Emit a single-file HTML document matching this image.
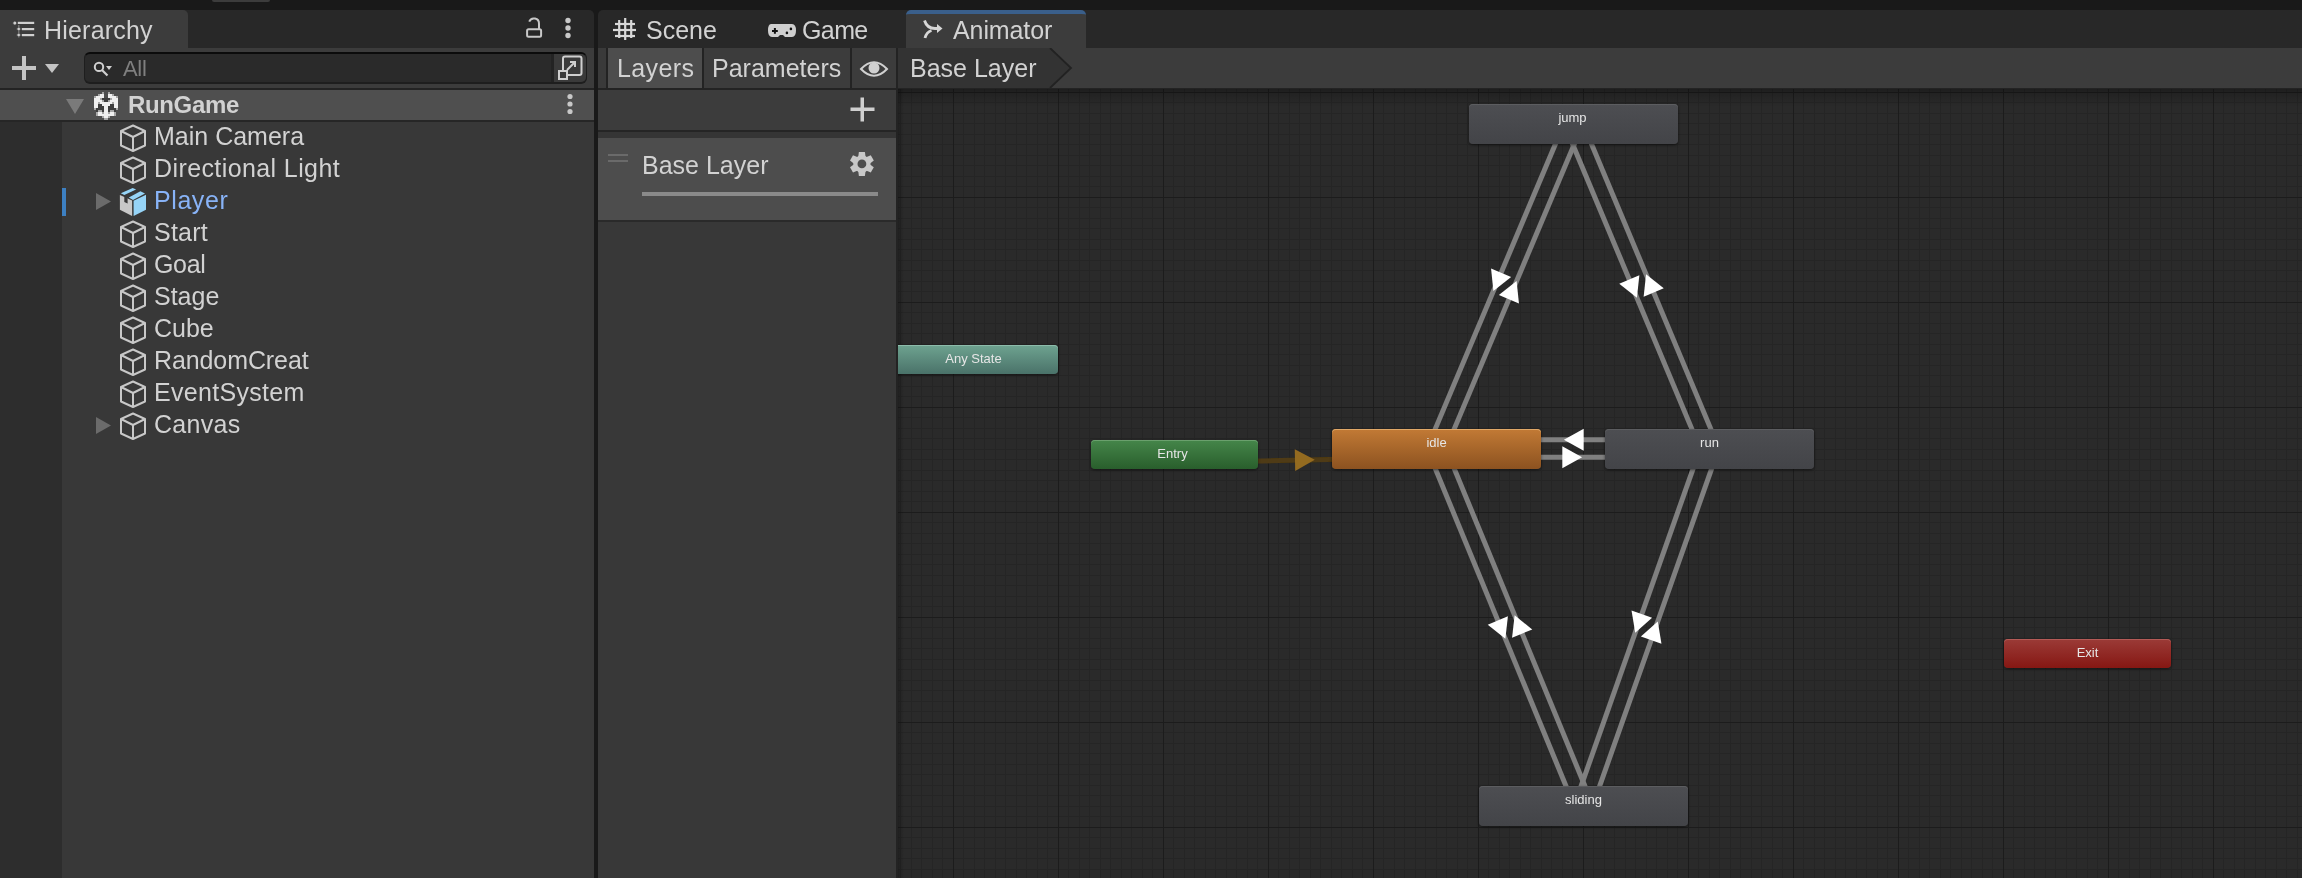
<!DOCTYPE html><html><head><meta charset="utf-8"><style>
*{margin:0;padding:0;box-sizing:border-box}
html,body{width:2302px;height:878px;overflow:hidden;background:#191919;font-family:'Liberation Sans', sans-serif}
.a{position:absolute}
.t{position:absolute;font-size:25px;line-height:25px;color:#d2d2d2;white-space:nowrap;will-change:transform}
</style></head><body><div class="a" style="left:212px;top:0;width:58px;height:2px;background:#3c3c3c;border-radius:0 0 2px 2px"></div><div class="a" style="left:0;top:10px;width:594px;height:38px;background:#282828;border-top-right-radius:5px"></div><div class="a" style="left:0;top:10px;width:188px;height:38px;background:#3c3c3c;border-top-right-radius:5px"></div><svg class="a" style="left:12px;top:20px" width="24" height="20" viewBox="0 0 24 20"><g fill="#d0d0d0"><rect x="1.6" y="1.9" width="2.4" height="2.4"/><rect x="0.8" y="2.6" width="4" height="1" opacity=".5"/><rect x="2.3" y="1" width="1" height="4" opacity=".5"/><rect x="5.8" y="1.8" width="16.4" height="2.2"/><rect x="5.6" y="7.9" width="2.2" height="2.2"/><rect x="9.9" y="8" width="12.3" height="2.2"/><rect x="5.6" y="13.9" width="2.2" height="2.2"/><rect x="9.9" y="14" width="12.3" height="2.2"/><rect x="6.2" y="5" width="1.2" height="12.5" opacity=".45"/><rect x="4.6" y="8.5" width="5" height="1" opacity=".4"/><rect x="4.6" y="14.5" width="5" height="1" opacity=".4"/></g></svg><div class="t" style="left:44px;top:18px;letter-spacing:0.2px">Hierarchy</div><svg class="a" style="left:524px;top:16px" width="20" height="24" viewBox="0 0 20 24"><rect x="3.1" y="13.2" width="14" height="7.6" rx="1.5" fill="none" stroke="#c8c8c8" stroke-width="2"/><path d="M5.2 5.6 A5.1 5.1 0 0 1 15 7.8 V13" fill="none" stroke="#c8c8c8" stroke-width="2"/></svg><svg class="a" style="left:562px;top:16px" width="12" height="24" viewBox="0 0 12 24"><circle cx="6" cy="4.5" r="2.7" fill="#c8c8c8"/><circle cx="6" cy="12" r="2.7" fill="#c8c8c8"/><circle cx="6" cy="19.5" r="2.7" fill="#c8c8c8"/></svg><div class="a" style="left:0;top:48px;width:594px;height:40px;background:#3c3c3c"></div><div class="a" style="left:0;top:88px;width:594px;height:2px;background:#232323"></div><svg class="a" style="left:12px;top:56px" width="50" height="26" viewBox="0 0 50 26"><rect x="10" y="0" width="4" height="24" fill="#c4c4c4"/><rect x="0" y="10" width="24" height="4" fill="#c4c4c4"/><polygon points="33,8 47,8 40,17" fill="#c4c4c4"/></svg><div class="a" style="left:84px;top:52px;width:503px;height:32px;background:#2a2a2a;border:1px solid #1e1e1e;border-top:2px solid #0b0b0b;border-bottom:2px solid #1e1e1e;border-radius:6px;"></div><div class="a" style="left:551px;top:54px;width:3px;height:28px;background:#232323"></div><div class="a" style="left:554px;top:54px;width:32px;height:28px;background:#3a3a3a;border-radius:0 5px 5px 0"></div><svg class="a" style="left:556px;top:54px" width="28" height="28" viewBox="0 0 28 28"><rect x="7" y="2.5" width="18.5" height="18.5" rx="2" fill="none" stroke="#cfcfcf" stroke-width="2"/><rect x="3" y="17" width="8" height="8" fill="#3a3a3a" stroke="#cfcfcf" stroke-width="2"/><path d="M11 16 L19 8 M14 8 H19 V13" fill="none" stroke="#cfcfcf" stroke-width="2"/></svg><svg class="a" style="left:90px;top:58px" width="26" height="22" viewBox="0 0 26 22"><circle cx="9" cy="8.9" r="4.2" fill="none" stroke="#d0d0d0" stroke-width="2"/><path d="M12 12 L17.5 17.5" stroke="#d0d0d0" stroke-width="2.2"/><polygon points="16,8 22,8 19,12" fill="#d0d0d0"/></svg><div class="t" style="left:122.5px;top:56.3px;color:#7f7f7f;font-size:22px;letter-spacing:-0.3px">All</div><div class="a" style="left:0;top:90px;width:594px;height:788px;background:#383838"></div><div class="a" style="left:0;top:90px;width:62px;height:788px;background:#2d2d2d"></div><div class="a" style="left:0;top:90px;width:594px;height:30px;background:#4f4f4f"></div><div class="a" style="left:0;top:120px;width:594px;height:2px;background:#262626"></div><svg class="a" style="left:64px;top:96px" width="22" height="20" viewBox="0 0 22 20"><polygon points="2,3 20,3 11,18" fill="#7a7a7a"/></svg><svg class="a" style="left:94px;top:92px" width="24" height="28" viewBox="0 0 24 28" shape-rendering="crispEdges"><rect x="8" y="0" width="2" height="2" fill="#a8a8a8"/><rect x="14" y="0" width="2" height="2" fill="#a8a8a8"/><rect x="4" y="2" width="2" height="2" fill="#a8a8a8"/><rect x="6" y="2" width="2" height="2" fill="#f0f0f0"/><rect x="8" y="2" width="2" height="2" fill="#f0f0f0"/><rect x="14" y="2" width="2" height="2" fill="#f0f0f0"/><rect x="16" y="2" width="2" height="2" fill="#f0f0f0"/><rect x="18" y="2" width="2" height="2" fill="#a8a8a8"/><rect x="0" y="4" width="2" height="2" fill="#a8a8a8"/><rect x="2" y="4" width="2" height="2" fill="#f0f0f0"/><rect x="4" y="4" width="2" height="2" fill="#f0f0f0"/><rect x="6" y="4" width="2" height="2" fill="#f0f0f0"/><rect x="8" y="4" width="2" height="2" fill="#f0f0f0"/><rect x="14" y="4" width="2" height="2" fill="#f0f0f0"/><rect x="16" y="4" width="2" height="2" fill="#f0f0f0"/><rect x="18" y="4" width="2" height="2" fill="#f0f0f0"/><rect x="20" y="4" width="2" height="2" fill="#f0f0f0"/><rect x="22" y="4" width="2" height="2" fill="#a8a8a8"/><rect x="0" y="6" width="2" height="2" fill="#f0f0f0"/><rect x="2" y="6" width="2" height="2" fill="#f0f0f0"/><rect x="4" y="6" width="2" height="2" fill="#f0f0f0"/><rect x="6" y="6" width="2" height="2" fill="#a8a8a8"/><rect x="8" y="6" width="2" height="2" fill="#3e3e3e"/><rect x="10" y="6" width="2" height="2" fill="#3e3e3e"/><rect x="12" y="6" width="2" height="2" fill="#3e3e3e"/><rect x="14" y="6" width="2" height="2" fill="#3e3e3e"/><rect x="16" y="6" width="2" height="2" fill="#a8a8a8"/><rect x="18" y="6" width="2" height="2" fill="#f0f0f0"/><rect x="20" y="6" width="2" height="2" fill="#f0f0f0"/><rect x="22" y="6" width="2" height="2" fill="#f0f0f0"/><rect x="0" y="8" width="2" height="2" fill="#f0f0f0"/><rect x="2" y="8" width="2" height="2" fill="#f0f0f0"/><rect x="4" y="8" width="2" height="2" fill="#f0f0f0"/><rect x="6" y="8" width="2" height="2" fill="#f0f0f0"/><rect x="8" y="8" width="2" height="2" fill="#a8a8a8"/><rect x="10" y="8" width="2" height="2" fill="#3e3e3e"/><rect x="12" y="8" width="2" height="2" fill="#3e3e3e"/><rect x="14" y="8" width="2" height="2" fill="#a8a8a8"/><rect x="16" y="8" width="2" height="2" fill="#f0f0f0"/><rect x="18" y="8" width="2" height="2" fill="#f0f0f0"/><rect x="20" y="8" width="2" height="2" fill="#f0f0f0"/><rect x="22" y="8" width="2" height="2" fill="#f0f0f0"/><rect x="0" y="10" width="2" height="2" fill="#f0f0f0"/><rect x="2" y="10" width="2" height="2" fill="#f0f0f0"/><rect x="4" y="10" width="2" height="2" fill="#a8a8a8"/><rect x="6" y="10" width="2" height="2" fill="#f0f0f0"/><rect x="8" y="10" width="2" height="2" fill="#f0f0f0"/><rect x="10" y="10" width="2" height="2" fill="#f0f0f0"/><rect x="12" y="10" width="2" height="2" fill="#f0f0f0"/><rect x="14" y="10" width="2" height="2" fill="#f0f0f0"/><rect x="16" y="10" width="2" height="2" fill="#f0f0f0"/><rect x="18" y="10" width="2" height="2" fill="#a8a8a8"/><rect x="20" y="10" width="2" height="2" fill="#f0f0f0"/><rect x="22" y="10" width="2" height="2" fill="#f0f0f0"/><rect x="0" y="12" width="2" height="2" fill="#f0f0f0"/><rect x="2" y="12" width="2" height="2" fill="#f0f0f0"/><rect x="4" y="12" width="2" height="2" fill="#3e3e3e"/><rect x="6" y="12" width="2" height="2" fill="#3e3e3e"/><rect x="8" y="12" width="2" height="2" fill="#f0f0f0"/><rect x="10" y="12" width="2" height="2" fill="#f0f0f0"/><rect x="12" y="12" width="2" height="2" fill="#f0f0f0"/><rect x="14" y="12" width="2" height="2" fill="#f0f0f0"/><rect x="16" y="12" width="2" height="2" fill="#3e3e3e"/><rect x="18" y="12" width="2" height="2" fill="#3e3e3e"/><rect x="20" y="12" width="2" height="2" fill="#f0f0f0"/><rect x="22" y="12" width="2" height="2" fill="#f0f0f0"/><rect x="0" y="14" width="2" height="2" fill="#f0f0f0"/><rect x="2" y="14" width="2" height="2" fill="#f0f0f0"/><rect x="4" y="14" width="2" height="2" fill="#3e3e3e"/><rect x="6" y="14" width="2" height="2" fill="#3e3e3e"/><rect x="8" y="14" width="2" height="2" fill="#3e3e3e"/><rect x="10" y="14" width="2" height="2" fill="#f0f0f0"/><rect x="12" y="14" width="2" height="2" fill="#f0f0f0"/><rect x="14" y="14" width="2" height="2" fill="#3e3e3e"/><rect x="16" y="14" width="2" height="2" fill="#3e3e3e"/><rect x="18" y="14" width="2" height="2" fill="#3e3e3e"/><rect x="20" y="14" width="2" height="2" fill="#f0f0f0"/><rect x="22" y="14" width="2" height="2" fill="#f0f0f0"/><rect x="0" y="16" width="2" height="2" fill="#a8a8a8"/><rect x="2" y="16" width="2" height="2" fill="#3e3e3e"/><rect x="4" y="16" width="2" height="2" fill="#3e3e3e"/><rect x="6" y="16" width="2" height="2" fill="#3e3e3e"/><rect x="8" y="16" width="2" height="2" fill="#3e3e3e"/><rect x="10" y="16" width="2" height="2" fill="#f0f0f0"/><rect x="12" y="16" width="2" height="2" fill="#f0f0f0"/><rect x="14" y="16" width="2" height="2" fill="#3e3e3e"/><rect x="16" y="16" width="2" height="2" fill="#3e3e3e"/><rect x="18" y="16" width="2" height="2" fill="#3e3e3e"/><rect x="20" y="16" width="2" height="2" fill="#3e3e3e"/><rect x="22" y="16" width="2" height="2" fill="#a8a8a8"/><rect x="2" y="18" width="2" height="2" fill="#3e3e3e"/><rect x="4" y="18" width="2" height="2" fill="#a8a8a8"/><rect x="6" y="18" width="2" height="2" fill="#a8a8a8"/><rect x="8" y="18" width="2" height="2" fill="#3e3e3e"/><rect x="10" y="18" width="2" height="2" fill="#f0f0f0"/><rect x="12" y="18" width="2" height="2" fill="#f0f0f0"/><rect x="14" y="18" width="2" height="2" fill="#3e3e3e"/><rect x="16" y="18" width="2" height="2" fill="#a8a8a8"/><rect x="18" y="18" width="2" height="2" fill="#a8a8a8"/><rect x="20" y="18" width="2" height="2" fill="#3e3e3e"/><rect x="2" y="20" width="2" height="2" fill="#a8a8a8"/><rect x="4" y="20" width="2" height="2" fill="#f0f0f0"/><rect x="6" y="20" width="2" height="2" fill="#f0f0f0"/><rect x="8" y="20" width="2" height="2" fill="#a8a8a8"/><rect x="10" y="20" width="2" height="2" fill="#f0f0f0"/><rect x="12" y="20" width="2" height="2" fill="#f0f0f0"/><rect x="14" y="20" width="2" height="2" fill="#a8a8a8"/><rect x="16" y="20" width="2" height="2" fill="#f0f0f0"/><rect x="18" y="20" width="2" height="2" fill="#f0f0f0"/><rect x="20" y="20" width="2" height="2" fill="#a8a8a8"/><rect x="2" y="22" width="2" height="2" fill="#a8a8a8"/><rect x="4" y="22" width="2" height="2" fill="#f0f0f0"/><rect x="6" y="22" width="2" height="2" fill="#f0f0f0"/><rect x="8" y="22" width="2" height="2" fill="#f0f0f0"/><rect x="10" y="22" width="2" height="2" fill="#f0f0f0"/><rect x="12" y="22" width="2" height="2" fill="#f0f0f0"/><rect x="14" y="22" width="2" height="2" fill="#f0f0f0"/><rect x="16" y="22" width="2" height="2" fill="#f0f0f0"/><rect x="18" y="22" width="2" height="2" fill="#f0f0f0"/><rect x="20" y="22" width="2" height="2" fill="#a8a8a8"/><rect x="8" y="24" width="2" height="2" fill="#a8a8a8"/><rect x="10" y="24" width="2" height="2" fill="#f0f0f0"/><rect x="12" y="24" width="2" height="2" fill="#f0f0f0"/><rect x="14" y="24" width="2" height="2" fill="#a8a8a8"/><rect x="10" y="26" width="2" height="2" fill="#a8a8a8"/><rect x="12" y="26" width="2" height="2" fill="#a8a8a8"/></svg><div class="t" style="left:128px;top:92px;font-weight:bold;font-size:24px;letter-spacing:-0.35px">RunGame</div><svg class="a" style="left:564px;top:92px" width="12" height="24" viewBox="0 0 12 24"><circle cx="6" cy="4.5" r="2.6" fill="#c8c8c8"/><circle cx="6" cy="12" r="2.6" fill="#c8c8c8"/><circle cx="6" cy="19.5" r="2.6" fill="#c8c8c8"/></svg><svg class="a" style="left:119px;top:123px" width="28" height="30" viewBox="0 0 28 30"><g fill="none" stroke="#c8c8c8" stroke-width="2" stroke-linejoin="round"><path d="M14 2.5 L26 8 V22.5 L14 28 L2 22.5 V8 Z"/><path d="M2 8 L14 14 L26 8 M14 14 V28"/></g></svg><div class="t" style="left:154px;top:124px;color:#d2d2d2;letter-spacing:0px">Main Camera</div><svg class="a" style="left:119px;top:155px" width="28" height="30" viewBox="0 0 28 30"><g fill="none" stroke="#c8c8c8" stroke-width="2" stroke-linejoin="round"><path d="M14 2.5 L26 8 V22.5 L14 28 L2 22.5 V8 Z"/><path d="M2 8 L14 14 L26 8 M14 14 V28"/></g></svg><div class="t" style="left:154px;top:156px;color:#d2d2d2;letter-spacing:0.4px">Directional Light</div><svg class="a" style="left:119px;top:187px" width="28" height="30" viewBox="0 0 28 30"><path d="M0.9 7.9 L13.1 13.5 V29 L0.9 22.8 Z" fill="#c8c8c8"/><path d="M5.3 9.2 H8.6 V16.6 L5.3 15 Z" fill="#383838"/><path d="M14.6 13.7 L27 7.7 V22.8 L14.6 29 Z" fill="#96d4f7"/><path d="M1.8 6.3 L13.7 0.9 L17.1 2.5 L5.3 8.1 Z" fill="#96d4f7"/><path d="M9.8 10.6 L21.4 4.2 L26 6.5 L14 12.9 Z" fill="#96d4f7"/></svg><div class="t" style="left:154px;top:188px;color:#88b3f7;letter-spacing:0.58px">Player</div><svg class="a" style="left:94px;top:192px" width="20" height="20" viewBox="0 0 20 20"><polygon points="2,1 17,9.5 2,18" fill="#6b6b6b"/></svg><svg class="a" style="left:119px;top:219px" width="28" height="30" viewBox="0 0 28 30"><g fill="none" stroke="#c8c8c8" stroke-width="2" stroke-linejoin="round"><path d="M14 2.5 L26 8 V22.5 L14 28 L2 22.5 V8 Z"/><path d="M2 8 L14 14 L26 8 M14 14 V28"/></g></svg><div class="t" style="left:154px;top:220px;color:#d2d2d2;letter-spacing:0.25px">Start</div><svg class="a" style="left:119px;top:251px" width="28" height="30" viewBox="0 0 28 30"><g fill="none" stroke="#c8c8c8" stroke-width="2" stroke-linejoin="round"><path d="M14 2.5 L26 8 V22.5 L14 28 L2 22.5 V8 Z"/><path d="M2 8 L14 14 L26 8 M14 14 V28"/></g></svg><div class="t" style="left:154px;top:252px;color:#d2d2d2;letter-spacing:-0.33px">Goal</div><svg class="a" style="left:119px;top:283px" width="28" height="30" viewBox="0 0 28 30"><g fill="none" stroke="#c8c8c8" stroke-width="2" stroke-linejoin="round"><path d="M14 2.5 L26 8 V22.5 L14 28 L2 22.5 V8 Z"/><path d="M2 8 L14 14 L26 8 M14 14 V28"/></g></svg><div class="t" style="left:154px;top:284px;color:#d2d2d2;letter-spacing:0px">Stage</div><svg class="a" style="left:119px;top:315px" width="28" height="30" viewBox="0 0 28 30"><g fill="none" stroke="#c8c8c8" stroke-width="2" stroke-linejoin="round"><path d="M14 2.5 L26 8 V22.5 L14 28 L2 22.5 V8 Z"/><path d="M2 8 L14 14 L26 8 M14 14 V28"/></g></svg><div class="t" style="left:154px;top:316px;color:#d2d2d2;letter-spacing:0px">Cube</div><svg class="a" style="left:119px;top:347px" width="28" height="30" viewBox="0 0 28 30"><g fill="none" stroke="#c8c8c8" stroke-width="2" stroke-linejoin="round"><path d="M14 2.5 L26 8 V22.5 L14 28 L2 22.5 V8 Z"/><path d="M2 8 L14 14 L26 8 M14 14 V28"/></g></svg><div class="t" style="left:154px;top:348px;color:#d2d2d2;letter-spacing:-0.1px">RandomCreat</div><svg class="a" style="left:119px;top:379px" width="28" height="30" viewBox="0 0 28 30"><g fill="none" stroke="#c8c8c8" stroke-width="2" stroke-linejoin="round"><path d="M14 2.5 L26 8 V22.5 L14 28 L2 22.5 V8 Z"/><path d="M2 8 L14 14 L26 8 M14 14 V28"/></g></svg><div class="t" style="left:154px;top:380px;color:#d2d2d2;letter-spacing:0.3px">EventSystem</div><svg class="a" style="left:119px;top:411px" width="28" height="30" viewBox="0 0 28 30"><g fill="none" stroke="#c8c8c8" stroke-width="2" stroke-linejoin="round"><path d="M14 2.5 L26 8 V22.5 L14 28 L2 22.5 V8 Z"/><path d="M2 8 L14 14 L26 8 M14 14 V28"/></g></svg><div class="t" style="left:154px;top:412px;color:#d2d2d2;letter-spacing:0.3px">Canvas</div><svg class="a" style="left:94px;top:416px" width="20" height="20" viewBox="0 0 20 20"><polygon points="2,1 17,9.5 2,18" fill="#6b6b6b"/></svg><div class="a" style="left:62px;top:188px;width:4px;height:28px;background:#3d80c2"></div><div class="a" style="left:598px;top:10px;width:1704px;height:38px;background:#282828;border-top-left-radius:5px"></div><svg class="a" style="left:613px;top:18px" width="24" height="24" viewBox="0 0 24 24"><g fill="#d8d8d8"><rect x="5.1" y="2" width="2.2" height="18"/><rect x="11.1" y="0" width="2.2" height="22"/><rect x="17.1" y="2" width="2.2" height="18"/><rect x="2" y="4.9" width="20" height="2.2"/><rect x="0" y="10.9" width="23" height="2.2"/><rect x="2" y="16.9" width="20" height="2.2"/></g></svg><div class="t" style="left:646px;top:18px">Scene</div><svg class="a" style="left:767px;top:23px" width="30" height="16" viewBox="0 0 30 16"><path d="M4 1 H25 Q29 1 29 7.5 Q29 14 25 14 H18 L16 12 H13 L11 14 H5 Q1 14 1 7.5 Q1 1 4 1 Z" fill="#cfcfcf"/><path d="M5 7.9 H10.8 M7.9 5 V10.8" stroke="#111" stroke-width="2"/><circle cx="23.9" cy="5.9" r="1.3" fill="#111"/><circle cx="19.9" cy="9.9" r="1.3" fill="#111"/></svg><div class="t" style="left:802px;top:18px;letter-spacing:-0.6px">Game</div><div class="a" style="left:906px;top:10px;width:180px;height:38px;background:#3c3c3c;border-radius:5px 5px 0 0;border-top:4px solid #3a5f8b"></div><svg class="a" style="left:922px;top:19px" width="24" height="22" viewBox="0 0 24 22"><path d="M2.5 1.5 Q5 9.5 13 9.5 H16" fill="none" stroke="#d6d6d6" stroke-width="2.8"/><path d="M9.5 11.5 Q4.5 13 3 19" fill="none" stroke="#d6d6d6" stroke-width="2.8"/><polygon points="15,5 20.5,9.5 15,14" fill="#d6d6d6"/></svg><div class="t" style="left:953px;top:18px;letter-spacing:-0.1px">Animator</div><div class="a" style="left:598px;top:48px;width:1704px;height:40px;background:#3c3c3c"></div><div class="a" style="left:598px;top:88px;width:1704px;height:2px;background:#232323"></div><div class="a" style="left:598px;top:48px;width:8px;height:40px;background:#3a3a3a"></div><div class="a" style="left:606px;top:48px;width:2px;height:40px;background:#232323"></div><div class="a" style="left:608px;top:48px;width:94px;height:40px;background:#4d4d4d"></div><div class="a" style="left:702px;top:48px;width:2px;height:40px;background:#232323"></div><div class="a" style="left:850px;top:48px;width:2px;height:40px;background:#232323"></div><div class="a" style="left:896px;top:48px;width:2px;height:40px;background:#232323"></div><div class="t" style="left:617px;top:56px;letter-spacing:0.4px">Layers</div><div class="t" style="left:712px;top:56px">Parameters</div><svg class="a" style="left:858px;top:58px" width="32" height="22" viewBox="0 0 32 22"><path d="M3 11 Q16 -2.5 29 11 Q16 24.5 3 11 Z" fill="none" stroke="#d0d0d0" stroke-width="2"/><circle cx="16" cy="10" r="5.5" fill="#d0d0d0"/></svg><svg class="a" style="left:898px;top:48px" width="180" height="40" viewBox="0 0 180 40"><path d="M0 0 H152 L173 20 L152 40 H0 Z" fill="#333333"/><path d="M152 0 L173 20 L152 40" fill="none" stroke="#222222" stroke-width="1.8"/></svg><div class="t" style="left:910px;top:56px">Base Layer</div><div class="a" style="left:598px;top:90px;width:298px;height:788px;background:#383838"></div><div class="a" style="left:598px;top:90px;width:298px;height:40px;background:#3c3c3c"></div><div class="a" style="left:598px;top:130px;width:298px;height:2px;background:#252525"></div><div class="a" style="left:598px;top:132px;width:298px;height:6px;background:#353535"></div><svg class="a" style="left:850px;top:97px" width="25" height="25" viewBox="0 0 25 25"><rect x="10.5" y="0.5" width="3.5" height="24" fill="#cfcfcf"/><rect x="0.5" y="10.5" width="24" height="3.5" fill="#cfcfcf"/></svg><div class="a" style="left:598px;top:138px;width:298px;height:82px;background:#4d4d4d"></div><div class="a" style="left:598px;top:220px;width:298px;height:2px;background:#2a2a2a"></div><div class="a" style="left:608px;top:154px;width:20px;height:2px;background:#6a6a6a"></div><div class="a" style="left:608px;top:160px;width:20px;height:2px;background:#6a6a6a"></div><div class="t" style="left:642px;top:153px">Base Layer</div><svg class="a" style="left:849px;top:151px" width="26" height="26" viewBox="0 0 26 26"><g fill="#c8c8c8"><circle cx="12.9" cy="12.9" r="8.6"/><path d="M9.9 0.9 H15.9 L16.6 6 H9.2 Z" transform="rotate(0 12.9 12.9)"/><path d="M9.9 0.9 H15.9 L16.6 6 H9.2 Z" transform="rotate(60 12.9 12.9)"/><path d="M9.9 0.9 H15.9 L16.6 6 H9.2 Z" transform="rotate(120 12.9 12.9)"/><path d="M9.9 0.9 H15.9 L16.6 6 H9.2 Z" transform="rotate(180 12.9 12.9)"/><path d="M9.9 0.9 H15.9 L16.6 6 H9.2 Z" transform="rotate(240 12.9 12.9)"/><path d="M9.9 0.9 H15.9 L16.6 6 H9.2 Z" transform="rotate(300 12.9 12.9)"/></g><circle cx="12.9" cy="12.9" r="4.4" fill="#4d4d4d"/></svg><div class="a" style="left:642px;top:192px;width:236px;height:4px;background:#8a8a8a"></div><div class="a" style="left:896px;top:90px;width:2px;height:788px;background:#232323"></div><svg width="1404" height="789" viewBox="898 89 1404 789" style="position:absolute;left:898px;top:89px;display:block"><rect x="898" y="89" width="1404" height="789" fill="#2a2a2a"/><path d="M900.5 89V878 M911.5 89V878 M921.5 89V878 M932.5 89V878 M942.5 89V878 M953.5 89V878 M963.5 89V878 M974.5 89V878 M984.5 89V878 M995.5 89V878 M1005.5 89V878 M1016.5 89V878 M1026.5 89V878 M1037.5 89V878 M1047.5 89V878 M1058.5 89V878 M1068.5 89V878 M1079.5 89V878 M1089.5 89V878 M1100.5 89V878 M1110.5 89V878 M1121.5 89V878 M1131.5 89V878 M1142.5 89V878 M1152.5 89V878 M1163.5 89V878 M1173.5 89V878 M1184.5 89V878 M1194.5 89V878 M1205.5 89V878 M1215.5 89V878 M1226.5 89V878 M1236.5 89V878 M1247.5 89V878 M1257.5 89V878 M1268.5 89V878 M1278.5 89V878 M1289.5 89V878 M1299.5 89V878 M1310.5 89V878 M1320.5 89V878 M1331.5 89V878 M1341.5 89V878 M1352.5 89V878 M1362.5 89V878 M1373.5 89V878 M1383.5 89V878 M1394.5 89V878 M1404.5 89V878 M1415.5 89V878 M1425.5 89V878 M1436.5 89V878 M1446.5 89V878 M1457.5 89V878 M1467.5 89V878 M1478.5 89V878 M1488.5 89V878 M1499.5 89V878 M1509.5 89V878 M1520.5 89V878 M1530.5 89V878 M1541.5 89V878 M1551.5 89V878 M1562.5 89V878 M1572.5 89V878 M1583.5 89V878 M1593.5 89V878 M1604.5 89V878 M1614.5 89V878 M1625.5 89V878 M1635.5 89V878 M1646.5 89V878 M1656.5 89V878 M1667.5 89V878 M1677.5 89V878 M1688.5 89V878 M1698.5 89V878 M1709.5 89V878 M1719.5 89V878 M1730.5 89V878 M1740.5 89V878 M1751.5 89V878 M1761.5 89V878 M1772.5 89V878 M1782.5 89V878 M1793.5 89V878 M1803.5 89V878 M1814.5 89V878 M1824.5 89V878 M1835.5 89V878 M1845.5 89V878 M1856.5 89V878 M1866.5 89V878 M1877.5 89V878 M1887.5 89V878 M1898.5 89V878 M1908.5 89V878 M1919.5 89V878 M1929.5 89V878 M1940.5 89V878 M1950.5 89V878 M1961.5 89V878 M1971.5 89V878 M1982.5 89V878 M1992.5 89V878 M2003.5 89V878 M2013.5 89V878 M2024.5 89V878 M2034.5 89V878 M2045.5 89V878 M2055.5 89V878 M2066.5 89V878 M2076.5 89V878 M2087.5 89V878 M2097.5 89V878 M2108.5 89V878 M2118.5 89V878 M2129.5 89V878 M2139.5 89V878 M2150.5 89V878 M2160.5 89V878 M2171.5 89V878 M2181.5 89V878 M2192.5 89V878 M2202.5 89V878 M2213.5 89V878 M2223.5 89V878 M2234.5 89V878 M2244.5 89V878 M2255.5 89V878 M2265.5 89V878 M2276.5 89V878 M2286.5 89V878 M2297.5 89V878 M898 92.5H2302 M898 102.5H2302 M898 113.5H2302 M898 123.5H2302 M898 134.5H2302 M898 144.5H2302 M898 155.5H2302 M898 165.5H2302 M898 176.5H2302 M898 186.5H2302 M898 197.5H2302 M898 207.5H2302 M898 218.5H2302 M898 228.5H2302 M898 239.5H2302 M898 249.5H2302 M898 260.5H2302 M898 270.5H2302 M898 281.5H2302 M898 291.5H2302 M898 302.5H2302 M898 312.5H2302 M898 323.5H2302 M898 333.5H2302 M898 344.5H2302 M898 354.5H2302 M898 365.5H2302 M898 375.5H2302 M898 386.5H2302 M898 396.5H2302 M898 407.5H2302 M898 417.5H2302 M898 428.5H2302 M898 438.5H2302 M898 449.5H2302 M898 459.5H2302 M898 470.5H2302 M898 480.5H2302 M898 491.5H2302 M898 501.5H2302 M898 512.5H2302 M898 522.5H2302 M898 533.5H2302 M898 543.5H2302 M898 554.5H2302 M898 564.5H2302 M898 575.5H2302 M898 585.5H2302 M898 596.5H2302 M898 606.5H2302 M898 617.5H2302 M898 627.5H2302 M898 638.5H2302 M898 648.5H2302 M898 659.5H2302 M898 669.5H2302 M898 680.5H2302 M898 690.5H2302 M898 701.5H2302 M898 711.5H2302 M898 722.5H2302 M898 732.5H2302 M898 743.5H2302 M898 753.5H2302 M898 764.5H2302 M898 774.5H2302 M898 785.5H2302 M898 795.5H2302 M898 806.5H2302 M898 816.5H2302 M898 827.5H2302 M898 837.5H2302 M898 848.5H2302 M898 858.5H2302 M898 869.5H2302" stroke="#252525" stroke-width="1" fill="none" shape-rendering="crispEdges"/><path d="M953.5 89V878 M1058.5 89V878 M1163.5 89V878 M1268.5 89V878 M1373.5 89V878 M1478.5 89V878 M1583.5 89V878 M1688.5 89V878 M1793.5 89V878 M1898.5 89V878 M2003.5 89V878 M2108.5 89V878 M2213.5 89V878 M898 92.5H2302 M898 197.5H2302 M898 302.5H2302 M898 407.5H2302 M898 512.5H2302 M898 617.5H2302 M898 722.5H2302 M898 827.5H2302" stroke="#1c1c1c" stroke-width="1" fill="none" shape-rendering="crispEdges"/><defs><linearGradient id="tsh" x1="0" y1="0" x2="0" y2="1"><stop offset="0" stop-color="#000" stop-opacity="0.3"/><stop offset="0.35" stop-color="#000" stop-opacity="0.16"/><stop offset="1" stop-color="#000" stop-opacity="0"/></linearGradient></defs><rect x="898" y="89" width="1404" height="18" fill="url(#tsh)"/><defs><linearGradient id="lsh" x1="0" y1="0" x2="1" y2="0"><stop offset="0" stop-color="#000" stop-opacity="0.25"/><stop offset="1" stop-color="#000" stop-opacity="0"/></linearGradient></defs><rect x="898" y="89" width="6" height="789" fill="url(#lsh)"/><defs><filter id="soft" filterUnits="userSpaceOnUse" x="898" y="89" width="1404" height="789"><feGaussianBlur stdDeviation="0.55"/></filter></defs><line x1="1444.56" y1="451.90" x2="1581.56" y2="127.00" stroke="#808080" stroke-width="5" filter="url(#soft)"/><line x1="1565.44" y1="120.20" x2="1428.44" y2="445.10" stroke="#808080" stroke-width="5" filter="url(#soft)"/><line x1="1565.43" y1="126.98" x2="1701.43" y2="451.88" stroke="#808080" stroke-width="5" filter="url(#soft)"/><line x1="1717.57" y1="445.12" x2="1581.57" y2="120.22" stroke="#808080" stroke-width="5" filter="url(#soft)"/><line x1="1436.50" y1="457.25" x2="1709.50" y2="457.25" stroke="#808080" stroke-width="5" filter="url(#soft)"/><line x1="1709.50" y1="439.75" x2="1436.50" y2="439.75" stroke="#808080" stroke-width="5" filter="url(#soft)"/><line x1="1428.41" y1="451.83" x2="1575.41" y2="808.93" stroke="#808080" stroke-width="5" filter="url(#soft)"/><line x1="1591.59" y1="802.27" x2="1444.59" y2="445.17" stroke="#808080" stroke-width="5" filter="url(#soft)"/><line x1="1701.25" y1="445.59" x2="1575.25" y2="802.69" stroke="#808080" stroke-width="5" filter="url(#soft)"/><line x1="1591.75" y1="808.51" x2="1717.75" y2="451.41" stroke="#808080" stroke-width="5" filter="url(#soft)"/><line x1="1174.68" y1="462.75" x2="1436.68" y2="457.25" stroke="#4f3a12" stroke-width="5" filter="url(#soft)"/><polygon points="1516.60,281.06 1518.95,303.54 1498.86,295.07" fill="#ffffff"/><polygon points="1493.40,291.04 1491.05,268.56 1511.14,277.03" fill="#ffffff"/><polygon points="1636.94,297.82 1619.24,283.77 1639.35,275.35" fill="#ffffff"/><polygon points="1646.06,274.28 1663.76,288.33 1643.65,296.75" fill="#ffffff"/><polygon points="1582.10,457.25 1562.30,468.15 1562.30,446.35" fill="#ffffff"/><polygon points="1563.90,439.75 1583.70,428.85 1583.70,450.65" fill="#ffffff"/><polygon points="1505.37,638.80 1487.76,624.64 1507.92,616.34" fill="#ffffff"/><polygon points="1514.63,615.30 1532.24,629.46 1512.08,637.76" fill="#ffffff"/><polygon points="1635.22,632.72 1631.53,610.42 1652.09,617.68" fill="#ffffff"/><polygon points="1657.78,621.38 1661.47,643.68 1640.91,636.42" fill="#ffffff"/><polygon points="1314.78,459.81 1295.21,471.12 1294.76,449.33" fill="#946b20"/></svg><div class="a" style="left:898px;top:89px;width:1404px;height:789px;overflow:hidden"><div class="a" style="left:-898px;top:-89px;width:2302px;height:878px"><div style="position:absolute;left:1469px;top:104px;width:209px;height:40px;border-radius:4px;background:linear-gradient(180deg,#4d4e52,#434448);box-shadow:inset 0 1px 0 #5c5d60,0 1px 3px rgba(0,0,0,0.55);"><div style="position:absolute;left:-1.5px;right:1.5px;top:7px;text-align:center;font:13px/14px 'Liberation Sans', sans-serif;color:#e6e6e6;will-change:transform">jump</div></div><div style="position:absolute;left:1479px;top:786px;width:209px;height:40px;border-radius:4px;background:linear-gradient(180deg,#4d4e52,#434448);box-shadow:inset 0 1px 0 #5c5d60,0 1px 3px rgba(0,0,0,0.55);"><div style="position:absolute;left:-0.5px;right:0.5px;top:7px;text-align:center;font:13px/14px 'Liberation Sans', sans-serif;color:#e6e6e6;will-change:transform">sliding</div></div><div style="position:absolute;left:1605px;top:429px;width:209px;height:40px;border-radius:4px;background:linear-gradient(180deg,#4d4e52,#434448);box-shadow:inset 0 1px 0 #5c5d60,0 1px 3px rgba(0,0,0,0.55);"><div style="position:absolute;left:-0.5px;right:0.5px;top:7px;text-align:center;font:13px/14px 'Liberation Sans', sans-serif;color:#e6e6e6;will-change:transform">run</div></div><div style="position:absolute;left:1332px;top:429px;width:209px;height:40px;border-radius:4px;background:linear-gradient(180deg,#c27a35,#8c5220);box-shadow:inset 0 1px 0 #e0a868,0 1px 3px rgba(0,0,0,0.55);"><div style="position:absolute;left:-0.5px;right:0.5px;top:7px;text-align:center;font:13px/14px 'Liberation Sans', sans-serif;color:#e6e6e6;will-change:transform">idle</div></div><div style="position:absolute;left:1091px;top:440px;width:167px;height:29px;border-radius:4px;background:linear-gradient(180deg,#45864a,#295e2c);box-shadow:inset 0 1px 0 #6aa06d,0 1px 3px rgba(0,0,0,0.55);"><div style="position:absolute;left:-2.5px;right:2.5px;top:7px;text-align:center;font:13px/14px 'Liberation Sans', sans-serif;color:#e6e6e6;will-change:transform">Entry</div></div><div style="position:absolute;left:891px;top:345px;width:167px;height:29px;border-radius:4px;background:linear-gradient(180deg,#6ea390,#4a7269);box-shadow:inset 0 1px 0 #8dbcab,0 1px 3px rgba(0,0,0,0.55);"><div style="position:absolute;left:-1px;right:1px;top:7px;text-align:center;font:13px/14px 'Liberation Sans', sans-serif;color:#e6e6e6;will-change:transform">Any State</div></div><div style="position:absolute;left:2004px;top:639px;width:167px;height:29px;border-radius:4px;background:linear-gradient(180deg,#9b3b37,#861713);box-shadow:inset 0 1px 0 #b45a56,0 1px 3px rgba(0,0,0,0.55);"><div style="position:absolute;left:-0.5px;right:0.5px;top:7px;text-align:center;font:13px/14px 'Liberation Sans', sans-serif;color:#e6e6e6;will-change:transform">Exit</div></div></div></div></body></html>
